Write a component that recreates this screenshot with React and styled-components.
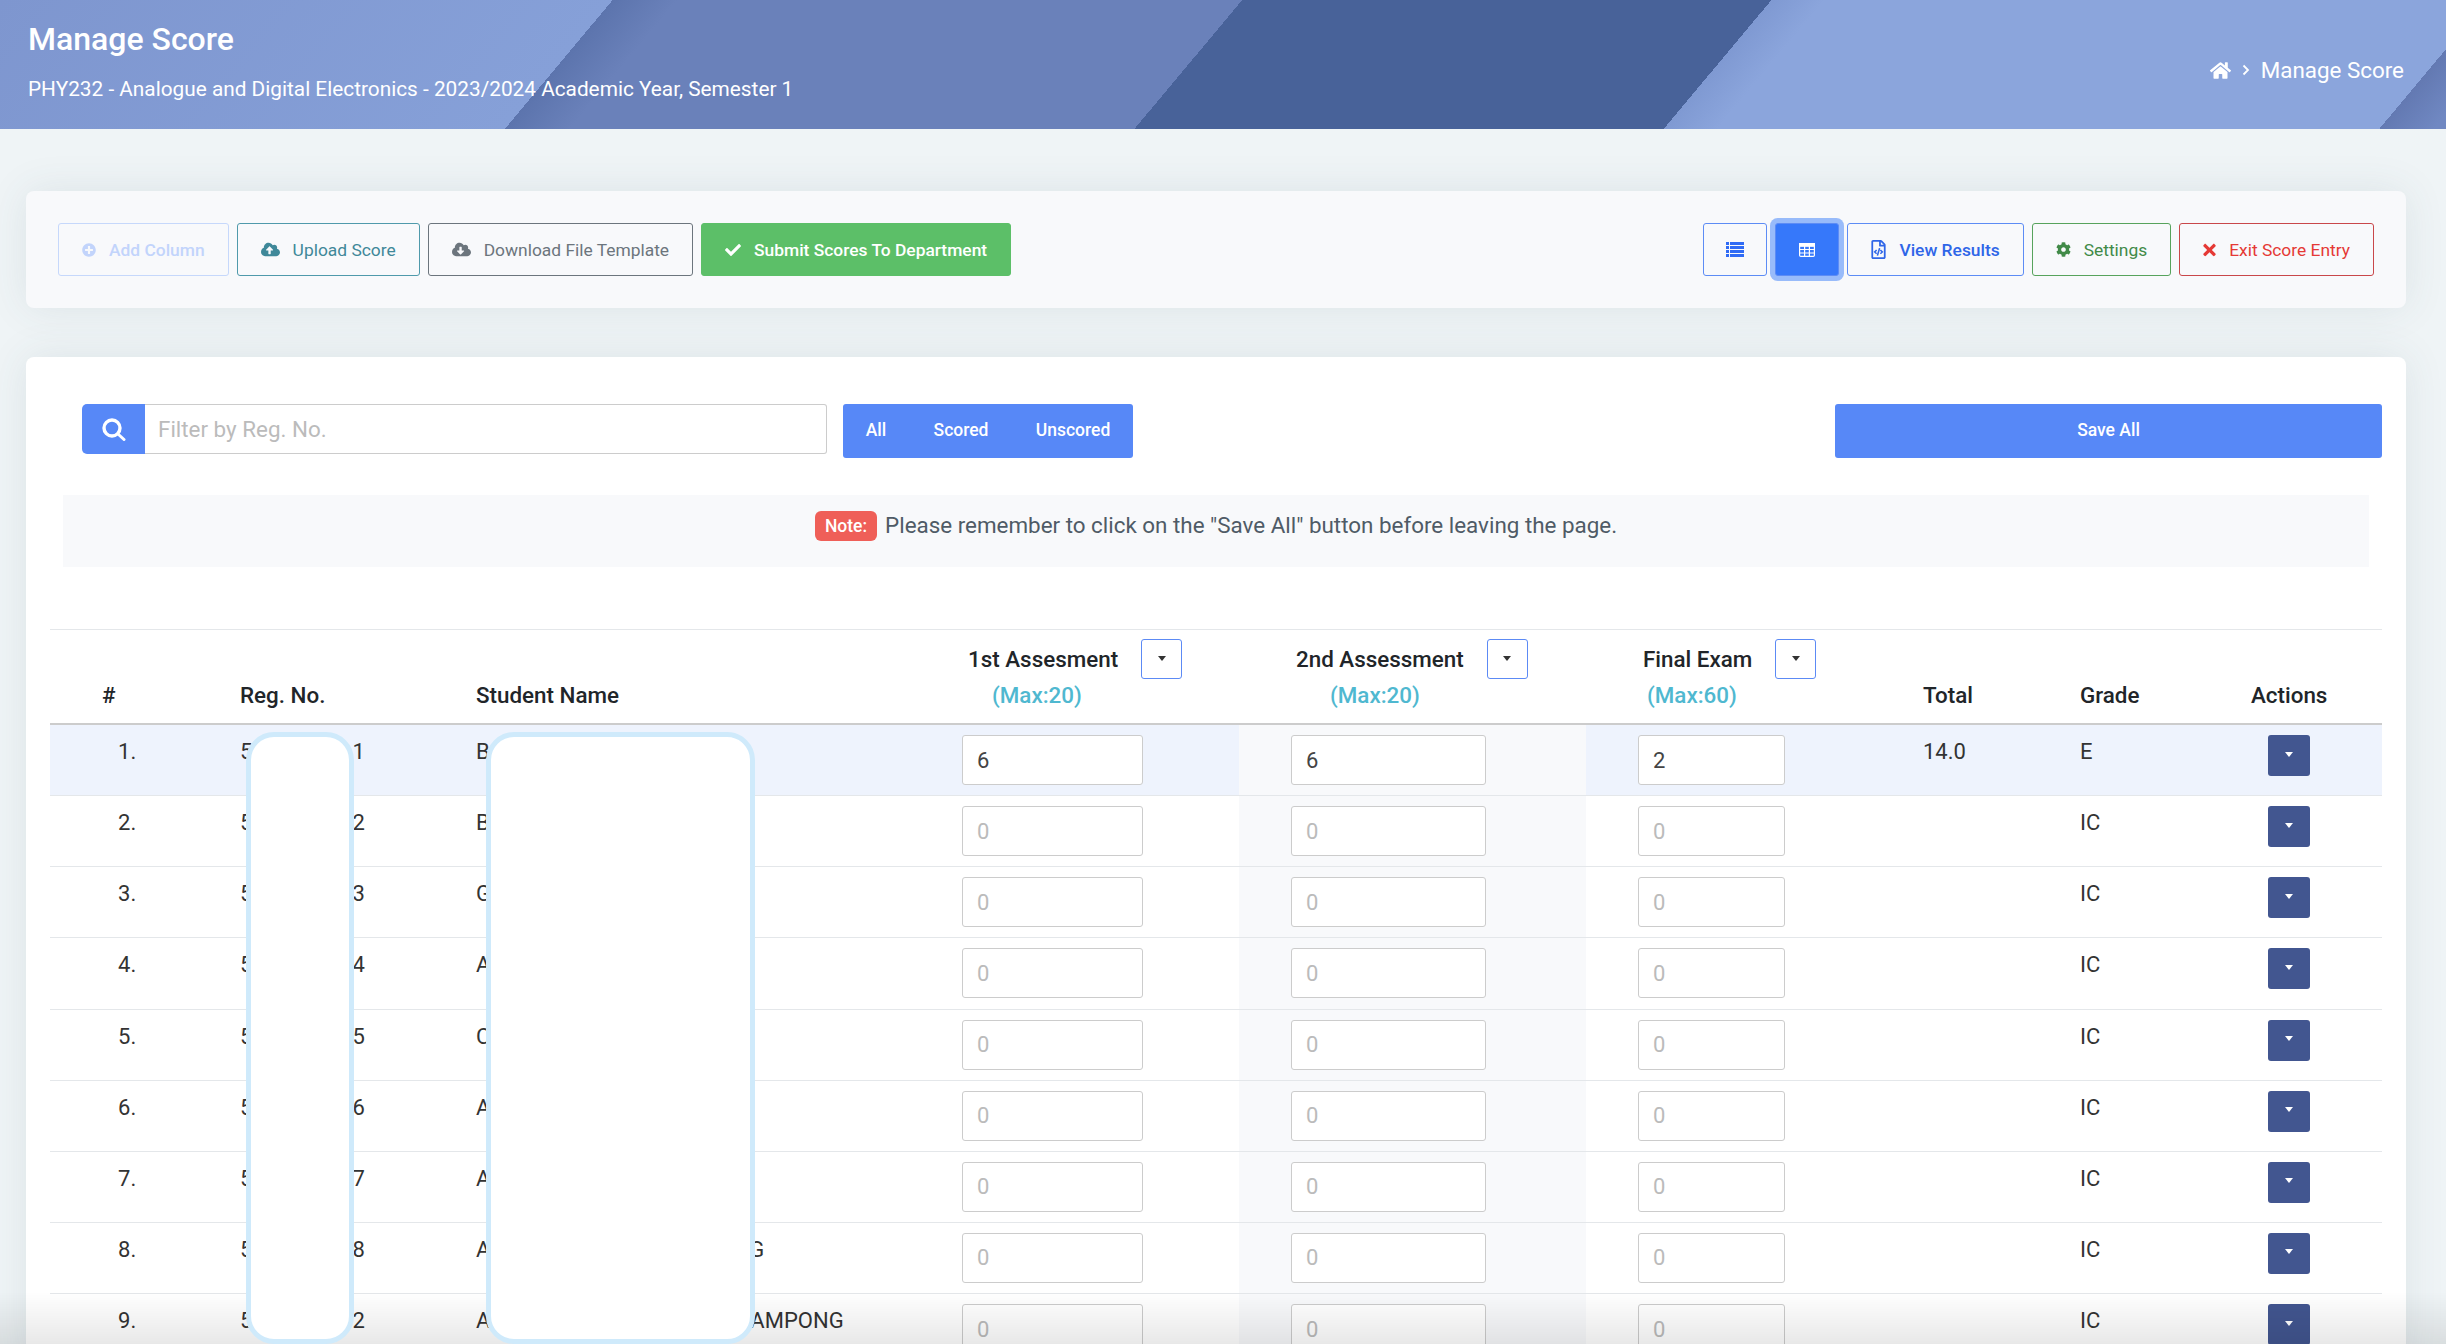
import React from "react";
import styled, { createGlobalStyle } from "styled-components";
import {
  FaCheck,
  FaCloudDownloadAlt,
  FaCloudUploadAlt,
  FaCog,
  FaHome,
  FaPlusCircle,
  FaRegFileCode,
  FaTimes,
} from "react-icons/fa";

const GlobalStyle = createGlobalStyle`
  html, body {
    margin: 0;
    height: 100%;
    overflow: hidden;
    background: #eff4f6;
    font-family: Roboto, "Liberation Sans", sans-serif;
    color: #333;
  }
  * { box-sizing: border-box; }
`;

const Banner = styled.header`
  height: 129px;
  padding: 0 42px 0 28px;
  display: flex;
  justify-content: space-between;
  color: white;
  background: linear-gradient(
    129.9deg,
    #7e96cf 0,
    #86a0d8 470px,
    #5c74ad 470px,
    #6a81ba 520px,
    #6a81ba 953px,
    #486299 953px,
    #486299 1359px,
    #7f99d2 1359px,
    #8ba5dc 1400px,
    #8ba5dc 1908px,
    #6379b2 1908px,
    #7088c2 1950px
  );
`;

const BannerText = styled.div`
  padding-top: 20px;
`;

const PageTitle = styled.h1`
  margin: 0;
  font-size: 32px;
  line-height: 38px;
  font-weight: 500;
`;

const PageSub = styled.div`
  margin-top: 13px;
  font-size: 20.8px;
  line-height: 36px;
`;

const Crumbs = styled.div`
  margin-top: 53px;
  height: 34px;
  display: flex;
  align-items: center;
  gap: 11px;
  font-size: 22.4px;
`;

const Main = styled.main`
  padding: 62px 40px 0 26px;
  display: flex;
  flex-direction: column;
  gap: 49px;
`;

const ToolCard = styled.section`
  background: #f8f9fb;
  border-radius: 8px;
  padding: 32px;
  display: flex;
  justify-content: space-between;
  box-shadow: 0 0 40px rgba(60, 85, 100, 0.1);
`;

const BtnRow = styled.div`
  display: flex;
  gap: 8px;
`;

const tones = {
  add: { line: "#c6d8fb", ink: "#c2d4fb", weight: 500 },
  upload: { line: "#4f9aab", ink: "#3f8899", weight: 400 },
  download: { line: "#6c757d", ink: "#6c757d", weight: 400 },
  view: { line: "#5d8cf5", ink: "#2f66e8", weight: 500 },
  settings: { line: "#57a35c", ink: "#418a48", weight: 400 },
  exit: { line: "#c9474a", ink: "#e53935", weight: 400 },
};

const ToolBtn = styled.button`
  height: 53px;
  padding: 0 23px;
  display: flex;
  align-items: center;
  gap: 13px;
  background: transparent;
  border: 1.5px solid ${(p) => tones[p.$tone].line};
  border-radius: 3px;
  color: ${(p) => tones[p.$tone].ink};
  font-family: inherit;
  font-size: 17.4px;
  font-weight: ${(p) => tones[p.$tone].weight};
  white-space: nowrap;
`;

const SubmitBtn = styled(ToolBtn)`
  background: #5cbf68;
  border-color: #5cbf68;
  color: white;
  font-weight: 500;
`;

const FileIcon = styled(FaRegFileCode)`
  width: 15px;
  height: 19px;
`;

const CrossIcon = styled(FaTimes)`
  width: 13px;
  height: 18px;
`;

const ViewBtn = styled.button`
  width: 64px;
  height: 53px;
  display: flex;
  align-items: center;
  justify-content: center;
  border: 1.5px solid #5d8cf5;
  border-radius: 3px;
  background: ${(p) => (p.$active ? "#3678fa" : "transparent")};
  color: ${(p) => (p.$active ? "white" : "#2f6bf5")};
  box-shadow: ${(p) => (p.$active ? "0 0 0 5px #98bbfa" : "none")};
`;

const ScoreCard = styled.section`
  position: relative;
  background: white;
  border-radius: 8px 8px 0 0;
  padding: 47px 24px 0;
  box-shadow: 0 0 40px rgba(60, 85, 100, 0.1);
`;

const FilterBar = styled.div`
  display: flex;
  align-items: flex-start;
  padding-left: 32px;
`;

const SearchGroup = styled.div`
  width: 745px;
  height: 50px;
  display: flex;
`;

const SearchIcon = styled.div`
  width: 63px;
  display: flex;
  align-items: center;
  justify-content: center;
  background: #5788f7;
  border-radius: 5px 0 0 5px;
  color: white;
`;

const SearchInput = styled.input`
  flex: 1;
  min-width: 0;
  padding: 0 13px;
  border: 1.5px solid #ccc;
  border-left: 0;
  border-radius: 0 3px 3px 0;
  font-family: inherit;
  font-size: 22.4px;
  &::placeholder { color: #bbb; }
`;

const Segments = styled.div`
  margin-left: 16px;
  height: 54px;
  display: flex;
  background: #5788f7;
  border-radius: 3px;
`;

const Segment = styled.button`
  width: ${(p) => p.$w}px;
  padding: 0 0 3px;
  border: 0;
  background: transparent;
  color: white;
  font-family: inherit;
  font-size: 17.5px;
  font-weight: 500;
`;

const SaveAll = styled.button`
  margin-left: auto;
  width: 547px;
  height: 54px;
  padding: 0 0 3px;
  border: 0;
  border-radius: 3px;
  background: #5788f7;
  color: white;
  font-family: inherit;
  font-size: 17.5px;
  font-weight: 500;
`;

const NoteBox = styled.div`
  margin: 37px 13px 62px;
  height: 72px;
  padding-top: 16px;
  display: flex;
  align-items: flex-start;
  justify-content: center;
  gap: 8px;
  background: #f8f9fb;
  color: #4f5b66;
  font-size: 22.4px;
  line-height: 28px;
`;

const NoteBadge = styled.span`
  height: 30px;
  padding: 0 10px;
  display: flex;
  align-items: center;
  border-radius: 6px;
  background: #ef5f58;
  color: white;
  font-size: 17.5px;
  font-weight: 500;
`;

const TableWrap = styled.div`
  position: relative;
`;

const Table = styled.table`
  width: 2332px;
  table-layout: fixed;
  border-collapse: separate;
  border-spacing: 0;
`;

const Th = styled.th`
  height: 96px;
  padding: 0 12px 13px;
  padding-left: ${(p) => p.$pad ?? 12}px;
  border-top: 1.5px solid #e4e7ea;
  border-bottom: 2px solid #ccc;
  text-align: left;
  vertical-align: bottom;
  font-size: 22.4px;
  line-height: 30px;
  font-weight: 500;
  color: #212529;
  white-space: nowrap;
`;

const ThHead = styled.div`
  display: flex;
  align-items: center;
  gap: 23px;
  margin-bottom: 1px;
`;

const MaxLabel = styled.div`
  margin-left: ${(p) => p.$left}px;
  color: #4fb8d0;
`;

const Caret = styled.span`
  width: 0;
  height: 0;
  border-left: 4px solid transparent;
  border-right: 4px solid transparent;
  border-top: 5px solid ${(p) => p.$color};
`;

const HeadDrop = styled.button`
  width: 41px;
  height: 40px;
  padding: 0 0 2px;
  display: flex;
  align-items: center;
  justify-content: center;
  background: white;
  border: 1.5px solid #5c8af5;
  border-radius: 3px;
`;

const Tr = styled.tr`
  background: ${(p) => (p.$current ? "#eef3fd" : "white")};
`;

const Td = styled.td`
  height: 71.15px;
  padding: 12px 12px 0;
  padding-left: ${(p) => p.$pad ?? 12}px;
  border-bottom: 1.5px solid #e4e7ea;
  vertical-align: top;
  font-size: 22px;
  line-height: 30px;
  color: #333;
  white-space: nowrap;
  background: ${(p) => (p.$shaded ? "#f8f9fb" : "transparent")};
`;

const ScoreInput = styled.input`
  display: block;
  width: ${(p) => p.$w}px;
  height: 50px;
  margin-top: -2px;
  padding: 0 14px;
  background: white;
  border: 1.5px solid #ccc;
  border-radius: 3px;
  font-family: inherit;
  font-size: 22px;
  color: #444;
  &::placeholder { color: #bbb; }
`;

const ActionBtn = styled.button`
  width: 42px;
  height: 41px;
  margin: -2px 0 0 17px;
  padding: 0 0 3px;
  display: flex;
  align-items: center;
  justify-content: center;
  background: #425690;
  border: 0;
  border-radius: 3px;
`;

const Hidden = styled.span`
  display: inline-block;
  width: ${(p) => p.$w}px;
`;

const Redaction = styled.div`
  position: absolute;
  top: 103px;
  left: ${(p) => p.$left}px;
  width: ${(p) => p.$w}px;
  height: 612px;
  z-index: 3;
  background: white;
  border: 5px solid #cfeafb;
  border-radius: 28px;
`;

const BottomFade = styled.div`
  position: fixed;
  left: 0;
  right: 0;
  bottom: 0;
  height: 52px;
  z-index: 2;
  pointer-events: none;
  background: linear-gradient(rgba(0, 0, 0, 0), rgba(0, 0, 0, 0.09));
`;

// font awesome 4 look, the packaged ones have other proportions
const ListIcon = () => (
  <svg width="18" height="15" viewBox="0 0 18 15" fill="currentColor">
    {[0, 4, 8, 12].map((y) => (
      <g key={y}>
        <rect x="0" y={y} width="3" height="3" />
        <rect x="4" y={y} width="14" height="3" />
      </g>
    ))}
  </svg>
);

const TableIcon = () => (
  <svg width="16" height="14" viewBox="0 0 16 14" fill="none" stroke="currentColor" strokeWidth="1.2">
    <rect x="0.6" y="0.6" width="14.8" height="12.8" rx="1.2" />
    <rect x="0.6" y="0.6" width="14.8" height="2.6" fill="currentColor" />
    <path d="M5.6 3v10.4M10.4 3v10.4M1 6.5h14M1 10h14" />
  </svg>
);

const SearchGlyph = () => (
  <svg width="24" height="23" viewBox="0 0 24 23" fill="none" stroke="currentColor" strokeLinecap="round">
    <circle cx="10" cy="10" r="8" strokeWidth="3.4" />
    <path d="M16 16l6 5.5" strokeWidth="3" />
  </svg>
);

const CrumbChevron = () => (
  <svg width="8" height="12" viewBox="0 0 8 12" fill="none" stroke="currentColor" strokeWidth="1.8">
    <path d="M1.5 1.5L6 6l-4.5 4.5" />
  </svg>
);

const widths = [178, 236, 447, 328, 347, 325, 157, 171, 143];

const assessments = [
  { title: "1st Assesment", max: "(Max:20)", left: 24, input: 181 },
  { title: "2nd Assessment", max: "(Max:20)", left: 34, input: 195 },
  { title: "Final Exam", max: "(Max:60)", left: 4, input: 147 },
];

const students = [
  { last: "1", first: "B", scores: ["6", "6", "2"], total: "14.0", grade: "E" },
  { last: "2", first: "B", grade: "IC" },
  { last: "3", first: "G", grade: "IC" },
  { last: "4", first: "A", grade: "IC" },
  { last: "5", first: "C", grade: "IC" },
  { last: "6", first: "A", grade: "IC" },
  { last: "7", first: "A", grade: "IC" },
  { last: "8", first: "A", gap: 259, tail: "G", grade: "IC" },
  { last: "2", first: "A", gap: 260, tail: "AMPONG", grade: "IC" },
];

export default function App() {
  return (
    <>
      <GlobalStyle />
      <Banner>
        <BannerText>
          <PageTitle>Manage Score</PageTitle>
          <PageSub>PHY232 - Analogue and Digital Electronics - 2023/2024 Academic Year, Semester 1</PageSub>
        </BannerText>
        <Crumbs>
          <FaHome size={21} />
          <CrumbChevron />
          <span>Manage Score</span>
        </Crumbs>
      </Banner>
      <Main>
        <ToolCard>
          <BtnRow>
            <ToolBtn $tone="add"><FaPlusCircle size={14} />Add Column</ToolBtn>
            <ToolBtn $tone="upload"><FaCloudUploadAlt size={19} />Upload Score</ToolBtn>
            <ToolBtn $tone="download"><FaCloudDownloadAlt size={19} />Download File Template</ToolBtn>
            <SubmitBtn $tone="add"><FaCheck size={16} />Submit Scores To Department</SubmitBtn>
          </BtnRow>
          <BtnRow>
            <ViewBtn><ListIcon /></ViewBtn>
            <ViewBtn $active><TableIcon /></ViewBtn>
            <ToolBtn $tone="view"><FileIcon />View Results</ToolBtn>
            <ToolBtn $tone="settings"><FaCog size={15} />Settings</ToolBtn>
            <ToolBtn $tone="exit"><CrossIcon />Exit Score Entry</ToolBtn>
          </BtnRow>
        </ToolCard>
        <ScoreCard>
          <FilterBar>
            <SearchGroup>
              <SearchIcon><SearchGlyph /></SearchIcon>
              <SearchInput placeholder="Filter by Reg. No." />
            </SearchGroup>
            <Segments>
              <Segment $w={66}>All</Segment>
              <Segment $w={104}>Scored</Segment>
              <Segment $w={120}>Unscored</Segment>
            </Segments>
            <SaveAll>Save All</SaveAll>
          </FilterBar>
          <NoteBox>
            <NoteBadge>Note:</NoteBadge>
            <span>Please remember to click on the "Save All" button before leaving the page.</span>
          </NoteBox>
          <TableWrap>
            <Table>
              <colgroup>
                {widths.map((w, i) => (
                  <col key={i} width={w} />
                ))}
              </colgroup>
              <thead>
                <tr>
                  <Th $pad={52}>#</Th>
                  <Th>Reg. No.</Th>
                  <Th>Student Name</Th>
                  {assessments.map((a) => (
                    <Th key={a.title} $pad={57}>
                      <ThHead>
                        {a.title}
                        <HeadDrop><Caret $color="#333" /></HeadDrop>
                      </ThHead>
                      <MaxLabel $left={a.left}>{a.max}</MaxLabel>
                    </Th>
                  ))}
                  <Th>Total</Th>
                  <Th>Grade</Th>
                  <Th>Actions</Th>
                </tr>
              </thead>
              <tbody>
                {students.map((s, i) => (
                  <Tr key={i} $current={i === 0}>
                    <Td $pad={68}>{i + 1}.</Td>
                    <Td>5<Hidden $w={100} />{s.last}</Td>
                    <Td>{s.first}{s.tail && <Hidden $w={s.gap} />}{s.tail}</Td>
                    {assessments.map((a, k) => (
                      <Td key={a.title} $pad={k === 0 ? 51 : 52} $shaded={k === 1}>
                        <ScoreInput $w={a.input} defaultValue={s.scores?.[k]} placeholder="0" />
                      </Td>
                    ))}
                    <Td>{s.total}</Td>
                    <Td>{s.grade}</Td>
                    <Td>
                      <ActionBtn><Caret $color="white" /></ActionBtn>
                    </Td>
                  </Tr>
                ))}
              </tbody>
            </Table>
            <Redaction $left={196} $w={108} />
            <Redaction $left={436} $w={269} />
          </TableWrap>
        </ScoreCard>
      </Main>
      <BottomFade />
    </>
  );
}
